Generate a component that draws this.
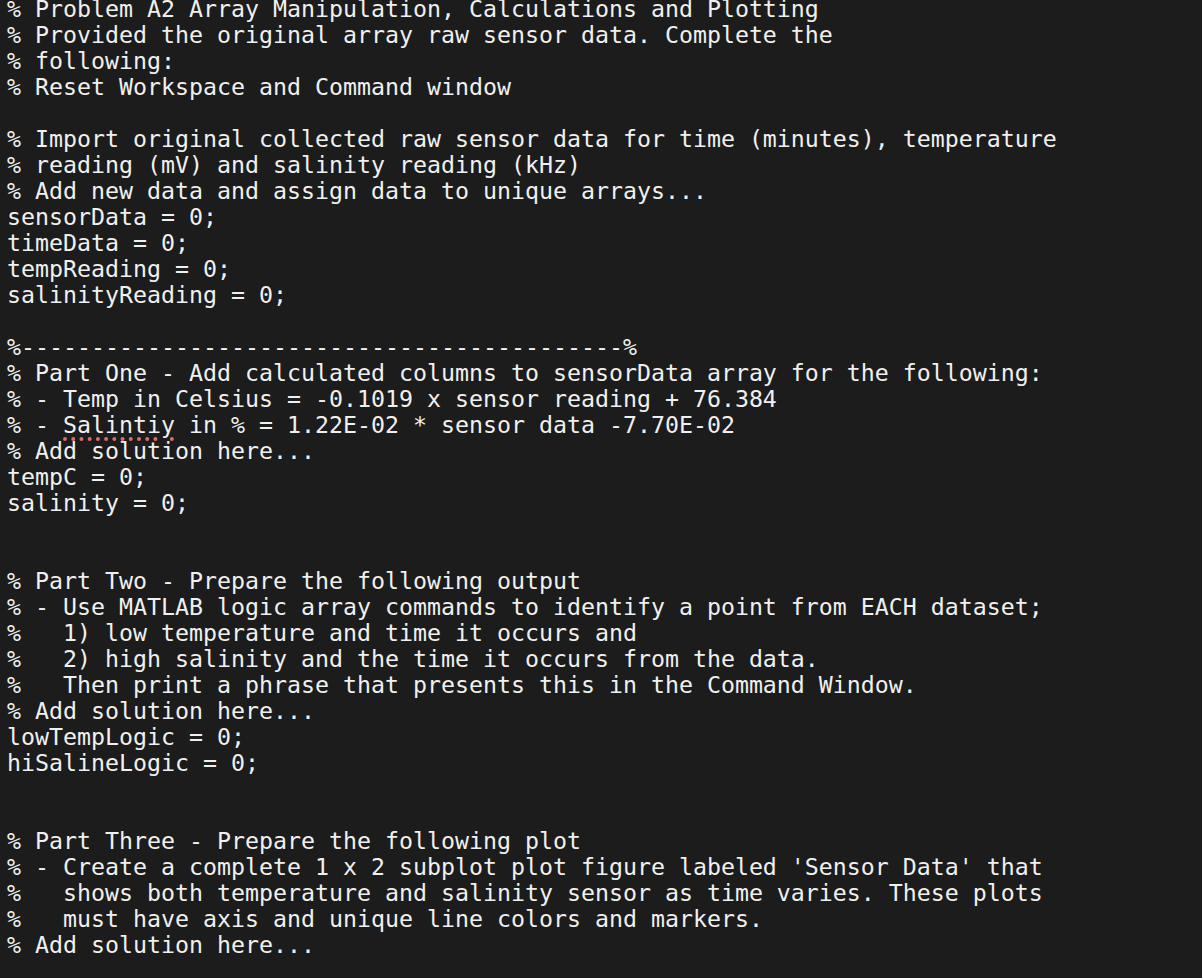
import React from "react";

const lines: string[] = [
  "% Problem A2 Array Manipulation, Calculations and Plotting",
  "% Provided the original array raw sensor data. Complete the",
  "% following:",
  "% Reset Workspace and Command window",
  "",
  "% Import original collected raw sensor data for time (minutes), temperature",
  "% reading (mV) and salinity reading (kHz)",
  "% Add new data and assign data to unique arrays...",
  "sensorData = 0;",
  "timeData = 0;",
  "tempReading = 0;",
  "salinityReading = 0;",
  "",
  "%-------------------------------------------%",
  "% Part One - Add calculated columns to sensorData array for the following:",
  "% - Temp in Celsius = -0.1019 x sensor reading + 76.384",
  "SALINTIY",
  "% Add solution here...",
  "tempC = 0;",
  "salinity = 0;",
  "",
  "",
  "% Part Two - Prepare the following output",
  "% - Use MATLAB logic array commands to identify a point from EACH dataset;",
  "%   1) low temperature and time it occurs and",
  "%   2) high salinity and the time it occurs from the data.",
  "%   Then print a phrase that presents this in the Command Window.",
  "% Add solution here...",
  "lowTempLogic = 0;",
  "hiSalineLogic = 0;",
  "",
  "",
  "% Part Three - Prepare the following plot",
  "% - Create a complete 1 x 2 subplot plot figure labeled 'Sensor Data' that",
  "%   shows both temperature and salinity sensor as time varies. These plots",
  "%   must have axis and unique line colors and markers.",
  "% Add solution here...",
];

const App = () => {
  return (
    <div className="w-[1202px] h-[978px] overflow-hidden bg-[#1c1c1c] text-[#f0f0f0]">
      <div className="mt-[-4px] pl-[7px] font-['DejaVu_Sans_Mono',monospace] text-[23.25px] leading-[26px] whitespace-pre">
        {lines.map((line, i) =>
          line === "SALINTIY" ? (
            <div key={i} className="h-[26px]">
              {"% - "}
              <span className="underline decoration-dotted decoration-[#d96c6c] decoration-[4px] underline-offset-[4px]">
                Salintiy
              </span>
              {" in % = 1.22E-02 * sensor data -7.70E-02"}
            </div>
          ) : (
            <div key={i} className="h-[26px]">
              {line}
            </div>
          )
        )}
      </div>
    </div>
  );
};

export default App;
